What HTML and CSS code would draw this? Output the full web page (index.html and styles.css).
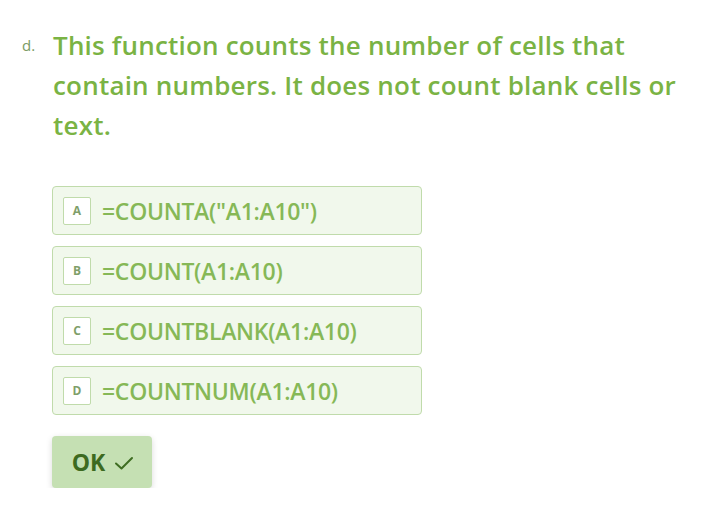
FILE: index.html
```html
<!DOCTYPE html>
<html>
<head>
<meta charset="utf-8">
<link rel="stylesheet" href="styles.css">
</head>
<body>
<div class="question">
  <div class="qhead">
    <span class="num">d.</span>
    <p class="qtext">This function counts the number of cells that contain numbers. It does not count blank cells or text.</p>
  </div>
  <div class="options">
    <div class="option"><span class="key">A</span><span class="label">=COUNTA("A1:A10")</span></div>
    <div class="option"><span class="key">B</span><span class="label">=COUNT(A1:A10)</span></div>
    <div class="option"><span class="key">C</span><span class="label">=COUNTBLANK(A1:A10)</span></div>
    <div class="option"><span class="key">D</span><span class="label">=COUNTNUM(A1:A10)</span></div>
  </div>
  <button class="ok">OK <svg class="check" width="20" height="16" viewBox="0 0 20 16"><path d="M2 8.5 L7.5 13.5 L18 3" fill="none" stroke="#3f6d22" stroke-width="2" stroke-linecap="round" stroke-linejoin="round"/></svg></button>
</div>
</body>
</html>
```
FILE: styles.css
```css
html, body {
  margin: 0;
  padding: 0;
  background: #ffffff;
}
body {
  font-family: "Open Sans", "Noto Sans", sans-serif;
}
.question {
  padding: 25px 0 0 22px;
}
.qhead {
  display: flex;
  align-items: flex-start;
}
.num {
  font-size: 15px;
  color: #7a9a64;
  width: 31px;
  padding-top: 10px;
  flex: none;
}
.qtext {
  margin: 0;
  font-size: 26px;
  line-height: 40px;
  font-weight: 600;
  color: #7ab344;
  width: 630px;
  letter-spacing: 0.2px;
}
.options {
  margin-top: 41px;
  margin-left: 30px;
  display: flex;
  flex-direction: column;
  gap: 11px;
  width: 370px;
}
.option {
  display: flex;
  align-items: center;
  height: 49px;
  box-sizing: border-box;
  border: 1px solid #c0dbab;
  border-radius: 4px;
  background: #f1f8ec;
  padding-left: 10px;
}
.key {
  width: 28px;
  height: 28px;
  box-sizing: border-box;
  border: 1px solid #c0dbab;
  border-radius: 2px;
  background: #ffffff;
  color: #7f9f6a;
  font-size: 12px;
  font-weight: 700;
  display: flex;
  align-items: center;
  justify-content: center;
  flex: none;
}
.label {
  margin-left: 11px;
  font-size: 23px;
  font-weight: 600;
  color: #86b857;
  letter-spacing: -0.3px;
}
.ok {
  margin: 21px 0 0 30px;
  width: 100px;
  height: 52px;
  border: none;
  border-radius: 4px;
  background: #c5e0b3;
  color: #3d6a20;
  font-family: "Open Sans", "Noto Sans", sans-serif;
  font-weight: 700;
  font-size: 23px;
  display: flex;
  align-items: center;
  justify-content: center;
  gap: 9px;
  padding: 0 0 0 2px;
  box-shadow: 0 2px 6px rgba(0,0,0,0.15);
}
.check {
  margin-top: 1px;
}
```
